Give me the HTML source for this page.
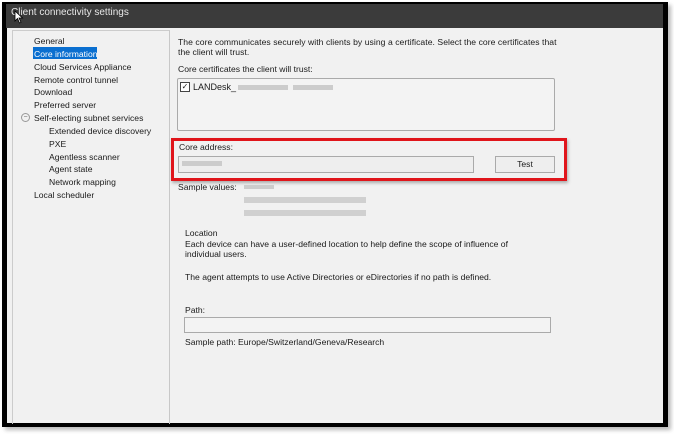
<!DOCTYPE html>
<html><head><meta charset="utf-8"><style>
body{margin:0;width:674px;height:434px;background:#fff;position:relative;overflow:hidden;font-family:"Liberation Sans",sans-serif;font-size:8.6px;color:#1a1a1a}
.a{position:absolute;white-space:nowrap}
</style></head><body>
<div class="a" style="left:2px;top:2px;width:666px;height:425px;background:#000;box-shadow:3px 3px 4px #bbb"></div>
<div class="a" style="left:6px;top:4px;width:657px;height:24px;background:#3b3b3b"></div>
<div class="a" style="left:11px;top:7px;color:#e8e8e8;font-size:10px">Client connectivity settings</div>
<svg class="a" style="left:14px;top:10px" width="10" height="14"><path d="M1 1 L1 11 L3.5 8.5 L5.5 13 L7 12.3 L5 8 L8.5 8 Z" fill="#fff" stroke="#000" stroke-width="0.8"/></svg>
<div class="a" style="left:7px;top:28px;width:656px;height:395px;background:#f1f1f1"></div>
<div class="a" style="left:12px;top:30px;width:156px;height:393px;border-left:1px solid #ccc;border-right:1px solid #c8c8c8;border-top:1px solid #ccc"></div>
<div class="a" style="left:33px;top:47px;width:64px;height:12px;background:#0a6fd0"></div>
<div class="a" style="left:34px;top:35px;line-height:12.85px">General<br><span style="color:#fff">Core information</span><br>Cloud Services Appliance<br>Remote control tunnel<br>Download<br>Preferred server<br>Self-electing subnet services<br><span style="padding-left:15px">Extended device discovery</span><br><span style="padding-left:15px">PXE</span><br><span style="padding-left:15px">Agentless scanner</span><br><span style="padding-left:15px">Agent state</span><br><span style="padding-left:15px">Network mapping</span><br>Local scheduler</div>
<div class="a" style="left:21px;top:113px;width:7px;height:7px;border:1px solid #999;border-radius:50%;font-size:7px;line-height:7px;text-align:center;color:#666">−</div>
<div class="a" style="left:178px;top:37px;line-height:10px;letter-spacing:0.05px">The core communicates securely with clients by using a certificate. Select the core certificates that<br>the client will trust.</div>
<div class="a" style="left:178px;top:64px">Core certificates the client will trust:</div>
<div class="a" style="left:177px;top:78px;width:376px;height:51px;border:1px solid #aaa;border-radius:2px;background:#f3f3f3"></div>
<div class="a" style="left:180px;top:82px;width:8px;height:8px;border:1px solid #444;background:#fff;font-size:8px;line-height:8px;text-align:center">✓</div>
<div class="a" style="left:193px;top:82px;font-size:9px">LANDesk_</div>
<div class="a" style="left:238px;top:85px;width:50px;height:5px;background:#ccc"></div>
<div class="a" style="left:293px;top:85px;width:40px;height:5px;background:#ccc"></div>
<div class="a" style="left:171px;top:138px;width:390px;height:37px;border:3px solid #e0151b;box-shadow:1px 2px 3px #aaa"></div>
<div class="a" style="left:179px;top:142px">Core address:</div>
<div class="a" style="left:178px;top:156px;width:294px;height:15px;border:1px solid #aaa;background:#eee"></div>
<div class="a" style="left:182px;top:161px;width:40px;height:5px;background:#ccc"></div>
<div class="a" style="left:495px;top:156px;width:58px;height:15px;border:1px solid #aaa;background:#eee;text-align:center;line-height:15px">Test</div>
<div class="a" style="left:178px;top:182px">Sample values:</div>
<div class="a" style="left:244px;top:185px;width:30px;height:4px;background:#ccc"></div>
<div class="a" style="left:244px;top:197px;width:122px;height:6px;background:#c8c8c8;opacity:.8"></div>
<div class="a" style="left:244px;top:210px;width:122px;height:6px;background:#c8c8c8;opacity:.8"></div>
<div class="a" style="left:185px;top:228px;line-height:10.5px">Location<br>Each device can have a user-defined location to help define the scope of influence of<br>individual users.</div>
<div class="a" style="left:185px;top:272px">The agent attempts to use Active Directories or eDirectories if no path is defined.</div>
<div class="a" style="left:185px;top:305px">Path:</div>
<div class="a" style="left:184px;top:317px;width:365px;height:14px;border:1px solid #aaa;background:#f3f3f3"></div>
<div class="a" style="left:185px;top:337px">Sample path: Europe/Switzerland/Geneva/Research</div>
</body></html>
